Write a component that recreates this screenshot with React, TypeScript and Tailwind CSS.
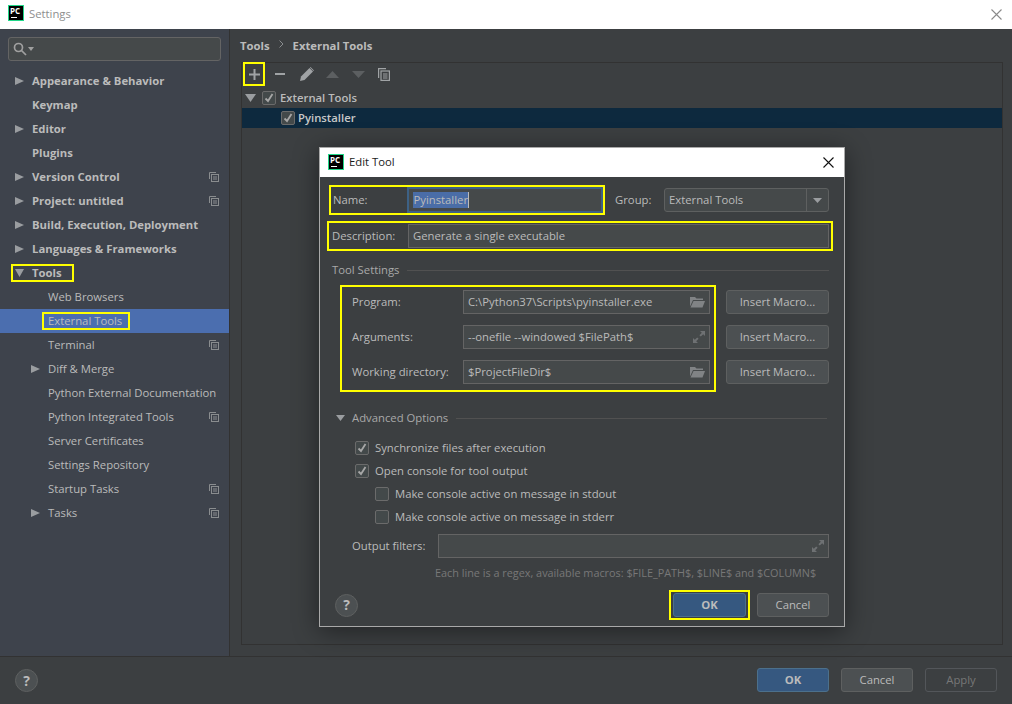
import React from "react";

const FONT = "font-['Open_Sans','Noto_Sans',sans-serif]";

const SIDEBAR: { label: string; level: 0 | 1; arrow?: "right" | "down"; scoped?: boolean; selected?: boolean; mark?: boolean }[] = [
  { label: "Appearance & Behavior", level: 0, arrow: "right" },
  { label: "Keymap", level: 0 },
  { label: "Editor", level: 0, arrow: "right" },
  { label: "Plugins", level: 0 },
  { label: "Version Control", level: 0, arrow: "right", scoped: true },
  { label: "Project: untitled", level: 0, arrow: "right", scoped: true },
  { label: "Build, Execution, Deployment", level: 0, arrow: "right" },
  { label: "Languages & Frameworks", level: 0, arrow: "right" },
  { label: "Tools", level: 0, arrow: "down", mark: true },
  { label: "Web Browsers", level: 1 },
  { label: "External Tools", level: 1, selected: true, mark: true },
  { label: "Terminal", level: 1, scoped: true },
  { label: "Diff & Merge", level: 1, arrow: "right" },
  { label: "Python External Documentation", level: 1 },
  { label: "Python Integrated Tools", level: 1, scoped: true },
  { label: "Server Certificates", level: 1 },
  { label: "Settings Repository", level: 1 },
  { label: "Startup Tasks", level: 1, scoped: true },
  { label: "Tasks", level: 1, arrow: "right", scoped: true },
];

function PcLogo({ className = "" }: { className?: string }) {
  return (
    <div className={`relative h-4 w-4 shrink-0 border border-[#21d789] bg-black ${className}`}>
      <span className="absolute left-[1px] top-[0px] text-[8px] font-bold leading-[9px] text-white">PC</span>
      <span className="absolute bottom-[2px] left-[2px] h-[1px] w-[6px] bg-white" />
    </div>
  );
}

function Triangle({ dir, className = "h-[8px] w-[9px]" }: { dir: "right" | "down" | "up"; className?: string }) {
  const points = dir === "right" ? "0,0 8,5 0,10" : dir === "down" ? "0,0 10,0 5,8" : "0,8 10,8 5,0";
  const box = dir === "right" ? "0 0 8 10" : "0 0 10 8";
  return (
    <svg viewBox={box} preserveAspectRatio="none" className={className}>
      <polygon points={points} fill="currentColor" />
    </svg>
  );
}

function ScopeIcon() {
  return (
    <svg viewBox="0 0 10 10" className="h-[10px] w-[10px] text-[#8a8d8f]" fill="none" stroke="currentColor">
      <path d="M.5 7V.5H7" />
      <rect x="2.5" y="2.5" width="7" height="7" />
      <path d="M4 5h4M4 7h4" />
    </svg>
  );
}

function FolderIcon() {
  return (
    <svg viewBox="0 0 15 12" className="h-3 w-[15px] text-[#808385]" fill="currentColor">
      <path d="M0 1h5l1.5 1.5H13V4H3L0 10.500z" />
      <path d="M3.500 5H15l-2.500 6.500H0.500z" />
    </svg>
  );
}

function ExpandIcon() {
  return (
    <svg viewBox="0 0 12 12" className="h-3 w-3 text-[#6e7173]" fill="currentColor">
      <path d="M7 0h5v5l-1.800-1.800-2.400 2.400-1.400-1.400 2.400-2.400z" />
      <path d="M0 12V7l1.800 1.800 2.400-2.400 1.400 1.400-2.400 2.400L5 12z" />
    </svg>
  );
}

function Check({ checked }: { checked: boolean }) {
  return (
    <div className="flex h-[14px] w-[14px] shrink-0 items-center justify-center rounded-[2px] border border-[#6b6b6b] bg-[#43494a]">
      {checked && (
        <svg viewBox="0 0 10 10" className="h-[10px] w-[10px] text-[#a7a7a7]" fill="none" stroke="currentColor" strokeWidth="1.800">
          <path d="M1.500 5.500 4 8l4.500-7" />
        </svg>
      )}
    </div>
  );
}

function HelpButton() {
  return (
    <div className="flex h-[23px] w-[23px] items-center justify-center rounded-full border border-[#5e6060] bg-[#4c5052] text-[14px] font-bold text-[#bbbbbb]">
      ?
    </div>
  );
}

function Button({ children, primary = false, disabled = false, className = "w-[72px]" }: { children: React.ReactNode; primary?: boolean; disabled?: boolean; className?: string }) {
  const tone = primary
    ? "border-[#4c708c] bg-[#365880] font-bold text-[#bbbbbb]"
    : disabled
      ? "border-[#53565a] bg-[#3c3f41] text-[#777777]"
      : "border-[#5e6060] bg-[#4c5052] text-[#bbbbbb]";
  return <div className={`flex h-6 items-center justify-center rounded-[3px] border ${tone} ${className}`}>{children}</div>;
}

function Input({ value, icon, className = "" }: { value?: string; icon?: React.ReactNode; className?: string }) {
  return (
    <div className={`flex h-6 items-center justify-between border border-[#646464] bg-[#45494a] pl-[4px] pr-[4px] text-[#bbbbbb] ${className}`}>
      <span>{value}</span>
      {icon}
    </div>
  );
}

function OptionRow({ label, checked, indent = false }: { label: string; checked: boolean; indent?: boolean }) {
  return (
    <div className={`flex h-[23px] items-center gap-[6px] ${indent ? "pl-[55px]" : "pl-[35px]"}`}>
      <Check checked={checked} />
      <span>{label}</span>
    </div>
  );
}

function ToolField({ label, value, icon }: { label: string; value: string; icon: React.ReactNode }) {
  return (
    <div className="flex items-center">
      <span className="w-[111px]">{label}</span>
      <Input value={value} icon={icon} className="w-[247px]" />
    </div>
  );
}

function EditToolDialog() {
  return (
    <div className="absolute left-[319px] top-[147px] flex h-[480px] w-[526px] flex-col border border-[#a9a9a9] bg-[#3c3f41] shadow-[0_4px_24px_rgba(0,0,0,0.45)]">
      <div className="flex h-[29px] shrink-0 items-center bg-white pb-[1px] pl-[8px] pr-[10px] text-[#1a1a1a]">
        <PcLogo />
        <span className="ml-[5px] flex-1">Edit Tool</span>
        <svg viewBox="0 0 11 11" className="h-[11px] w-[11px]" fill="none" stroke="#111" strokeWidth="1.100">
          <path d="M.5.5l10 10M10.500.5l-10 10" />
        </svg>
      </div>

      <div className="flex items-center pl-[9px] pt-[8px]">
        <div className="flex h-[30px] w-[276px] items-center border-2 border-[#ffff00] pl-[2px]">
          <span className="w-[75px]">Name:</span>
          <div className="flex h-[26px] w-[197px] items-center border-2 border-[#3d6185] bg-[#45494a] pl-[4px]">
            <span className="border-r border-[#bbbbbb] bg-[#4a6da7] py-[2px] text-[#bbbbbb]">Pyinstaller</span>
          </div>
        </div>
        <span className="ml-[10px] w-[49px]">Group:</span>
        <div className="flex h-6 w-[165px] items-center rounded-[3px] border border-[#5e6060] bg-[#45494a] pl-[4px]">
          <span className="flex-1">External Tools</span>
          <div className="flex h-full w-[22px] items-center justify-center border-l border-[#5e6060] text-[#9a9da0]">
            <Triangle dir="down" className="h-[5px] w-[9px]" />
          </div>
        </div>
      </div>

      <div className="ml-[7px] mt-[6px] flex h-[30px] w-[506px] items-center border-2 border-[#ffff00] pl-[3px] pr-[2px]">
        <span className="w-[76px]">Description:</span>
        <Input value="Generate a single executable" className="flex-1" />
      </div>

      <div className="mt-[11px] flex h-[16px] items-center pl-[12px] pr-[15px]">
        <span className="mr-[7px] text-[#a9a9a9]">Tool Settings</span>
        <div className="h-px flex-1 bg-[#515151]" />
      </div>

      <div className="flex pl-[20px] pr-[15px] pt-[7px]">
        <div className="flex h-[107px] w-[376px] flex-col gap-[11px] border-2 border-[#ffff00] pl-[10px] pt-[3px]">
          <ToolField label="Program:" value="C:\Python37\Scripts\pyinstaller.exe" icon={<FolderIcon />} />
          <ToolField label="Arguments:" value="--onefile --windowed $FilePath$" icon={<ExpandIcon />} />
          <ToolField label="Working directory:" value="$ProjectFileDir$" icon={<FolderIcon />} />
        </div>
        <div className="ml-[10px] flex flex-col gap-[11px] pt-[5px]">
          <Button className="w-[103px]">Insert Macro...</Button>
          <Button className="w-[103px]">Insert Macro...</Button>
          <Button className="w-[103px]">Insert Macro...</Button>
        </div>
      </div>

      <div className="mt-[18px] flex h-[16px] items-center pl-[16px] pr-[17px]">
        <Triangle dir="down" className="mr-[7px] h-[6px] w-[9px] text-[#9a9da0]" />
        <span className="mr-[8px] text-[#a9a9a9]">Advanced Options</span>
        <div className="h-px flex-1 bg-[#515151]" />
      </div>

      <div className="mt-[10px] flex flex-col">
        <OptionRow label="Synchronize files after execution" checked />
        <OptionRow label="Open console for tool output" checked />
        <OptionRow label="Make console active on message in stdout" checked={false} indent />
        <OptionRow label="Make console active on message in stderr" checked={false} indent />
      </div>

      <div className="mt-[6px] flex items-center pl-[32px] pr-[15px]">
        <span className="w-[86px]">Output filters:</span>
        <Input icon={<ExpandIcon />} className="flex-1 justify-end" />
      </div>

      <div className="mt-[10px] whitespace-nowrap pl-[115px] text-[10.85px] text-[#787878]">Each line is a regex, available macros: $FILE_PATH$, $LINE$ and $COLUMN$</div>

      <div className="mt-auto flex items-center pb-[6px] pl-[15px] pr-[15px]">
        <HelpButton />
        <div className="ml-auto flex items-center">
          <div className="border-2 border-[#ffff00] px-[2px] py-[1px]">
            <Button primary className="w-[73px]">OK</Button>
          </div>
          <Button className="ml-[7px] w-[72px]">Cancel</Button>
        </div>
      </div>
    </div>
  );
}

function Sidebar() {
  return (
    <aside className="flex w-[230px] shrink-0 flex-col border-r border-[#323232] bg-[#3e434c]">
      <div className="px-[8px] pt-[8px]">
        <div className="flex h-6 w-[213px] items-center gap-[1px] rounded-[3px] border border-[#646464] bg-[#45494a] pl-[4px] text-[#a0a0a0]">
          <svg viewBox="0 0 14 14" className="h-[14px] w-[14px]" fill="none" stroke="currentColor" strokeWidth="1.700">
            <circle cx="5.500" cy="5.500" r="4" />
            <path d="M8.500 8.500l4.500 4.500" />
          </svg>
          <svg viewBox="0 0 6 4" className="h-[4px] w-[6px]" fill="currentColor">
            <polygon points="0,0 6,0 3,4" />
          </svg>
        </div>
      </div>
      <nav className="mt-[8px] flex flex-col">
        {SIDEBAR.map((item) => (
          <div key={item.label} className={`flex h-6 items-center ${item.selected ? "bg-[#4b6eaf]" : ""}`}>
            <div className={`flex shrink-0 items-center text-[#9a9da0] ${item.level === 0 ? "w-[32px] pl-[15px]" : "w-[48px] pl-[31px]"}`}>
              {item.arrow && <Triangle dir={item.arrow} />}
            </div>
            <span className={`relative whitespace-nowrap ${item.level === 0 ? "font-bold" : ""}`}>
              {item.label}
              {item.mark && (
                <span className={`absolute border-2 border-[#ffff00] ${item.level === 0 ? "-left-[21px] -right-[12px] -top-[3px] -bottom-[3px]" : "-left-[6px] -right-[8px] -top-[3px] -bottom-[3px]"}`} />
              )}
            </span>
            {item.scoped && (
              <span className="ml-auto pr-[10px]">
                <ScopeIcon />
              </span>
            )}
          </div>
        ))}
      </nav>
    </aside>
  );
}

function MainPanel() {
  return (
    <main className="flex flex-1 flex-col pl-[11px] pr-[9px]">
      <div className="flex h-[22px] items-end gap-[9px] font-bold">
        <span className="-ml-[1px]">Tools</span>
        <svg viewBox="0 0 5 8" className="mb-[3px] h-2 w-[5px] text-[#8a8d8f]" fill="none" stroke="currentColor">
          <path d="M.5.5 4 4 .5 7.500" />
        </svg>
        <span>External Tools</span>
      </div>
      <div className="mt-[11px] flex h-[583px] flex-col border border-[#323232]">
        <div className="flex h-[25px] items-center pb-[3px] text-[#a0a3a5]">
          <div className="-mt-[1px] ml-[1px] flex h-[24px] w-[22px] items-center justify-center self-start border-2 border-[#ffff00]">
            <svg viewBox="0 0 11 11" className="h-[11px] w-[11px]" fill="currentColor">
              <path d="M4.500 0h2v4.500H11v2H6.500V11h-2V6.500H0v-2h4.500z" />
            </svg>
          </div>
          <div className="ml-[10px] h-[2px] w-[10px] bg-current" />
          <svg viewBox="0 0 14 14" className="ml-[15px] h-[14px] w-[14px]" fill="currentColor">
            <path d="M0 14l1-4.500L9.500 1l3.500 3.500L4.500 13z" />
            <path d="M10.500 0l3.500 3.500-.6.6L9.900.6z" />
          </svg>
          <Triangle dir="up" className="ml-[12px] h-[7px] w-[13px] text-[#5c5f61]" />
          <Triangle dir="down" className="ml-[13px] h-[7px] w-[13px] text-[#5c5f61]" />
          <svg viewBox="0 0 12 13" className="ml-[13px] h-[13px] w-[12px]" fill="none" stroke="currentColor" strokeWidth="1.200">
            <path d="M.6 10V.6H8" />
            <rect x="3" y="3" width="8.400" height="9.400" />
            <path d="M5 6h4.500M5 8h4.500M5 10h4.500" />
          </svg>
        </div>
        <div className="flex h-5 items-center font-semibold">
          <Triangle dir="down" className="ml-[3px] h-[8px] w-[11px] text-[#9a9da0]" />
          <span className="ml-[6px]"><Check checked /></span>
          <span className="ml-[4px]">External Tools</span>
        </div>
        <div className="flex h-5 items-center bg-[#0d293e] pl-[39px] font-semibold text-[#c8c8c8]">
          <Check checked />
          <span className="ml-[3px]">Pyinstaller</span>
        </div>
      </div>
    </main>
  );
}

export default function App() {
  return (
    <div className={`relative flex h-[704px] w-[1012px] flex-col overflow-hidden bg-[#3c3f41] text-[11.3px] leading-none text-[#bbbbbb] ${FONT}`}>
      <header className="flex h-[29px] shrink-0 items-center bg-white pb-[1px] pl-[8px] pr-[10px] text-[#8e8e8e]">
        <PcLogo className="-mt-[2px]" />
        <span className="ml-[5px] flex-1">Settings</span>
        <svg viewBox="0 0 11 11" className="h-[11px] w-[11px]" fill="none" stroke="#8a8a8a" strokeWidth="1.100">
          <path d="M.5.5l10 10M10.500.5l-10 10" />
        </svg>
      </header>

      <div className="flex h-[627px] shrink-0">
        <Sidebar />
        <MainPanel />
      </div>

      <footer className="flex flex-1 items-start justify-between border-t border-[#323232] pl-[15px] pr-[15px] pt-[11px]">
        <div className="mt-[1px]">
          <HelpButton />
        </div>
        <div className="flex gap-[12px]">
          <Button primary>OK</Button>
          <Button>Cancel</Button>
          <Button disabled>Apply</Button>
        </div>
      </footer>

      <EditToolDialog />
    </div>
  );
}
